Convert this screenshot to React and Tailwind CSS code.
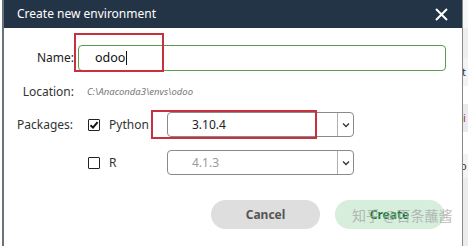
import React from "react";

const font = { fontFamily: '"Noto Sans", "Open Sans", "Noto Sans CJK SC", sans-serif' };

function Checkbox({ checked }) {
  return (
    <div className="w-[12px] h-[12px] border-[1.5px] border-[#222] rounded-[1px] flex items-center justify-center bg-white">
      {checked && (
        <svg width="10" height="10" viewBox="0 0 10 10">
          <path d="M1.5 5.2 L4 7.6 L8.6 2.2" fill="none" stroke="#111" strokeWidth="2" />
        </svg>
      )}
    </div>
  );
}

function Select({ value, muted }) {
  return (
    <div className="w-[187px] h-[25px] border border-[#8a8a8a] rounded-[4px] flex items-center bg-white">
      <div className={`flex-1 pl-[24px] text-[12px] ${muted ? "text-[#9a9a9a]" : "text-[#222]"}`}>{value}</div>
      <div className="w-[16px] h-full border-l border-[#b0b0b0] flex items-center justify-center">
        <svg width="8" height="6" viewBox="0 0 8 6">
          <path d="M1 1.5 L4 4.5 L7 1.5" fill="none" stroke="#333" strokeWidth="1.3" />
        </svg>
      </div>
    </div>
  );
}

export default function App() {
  return (
    <div className="relative w-[468px] h-[246px] bg-white flex overflow-hidden" style={font}>
      <div className="w-[2px] bg-white" />
      <div className="w-[460px] h-full border-l-2 border-[#66727e] flex flex-col">
        <div className="h-[28px] bg-[#243447] flex items-center justify-between pl-[13px] pr-[14px]">
          <span className="text-white text-[12px]">Create new environment</span>
          <svg width="13" height="13" viewBox="0 0 13 13">
            <path d="M1 1 L12 12 M12 1 L1 12" stroke="#fff" strokeWidth="2" />
          </svg>
        </div>

        <div className="flex items-center mt-[17px] h-[26px]">
          <div className="w-[70px] text-right text-[12px] text-[#222]">Name:</div>
          <div className="ml-[4px] w-[368px] h-[26px] border border-[#5c9a4e] rounded-[4px] flex items-center pl-[16px] text-[12.5px] text-[#111]">
            odoo<span className="ml-[1px] w-px h-[14px] bg-[#111]" />
          </div>
        </div>

        <div className="flex items-center mt-[11px] h-[20px]">
          <div className="w-[70px] text-right text-[12px] text-[#333]">Location:</div>
          <div className="ml-[13px] text-[9.5px] italic text-[#777]">C:\Anaconda3\envs\odoo</div>
        </div>

        <div className="flex items-center mt-[10px] h-[25px]">
          <div className="w-[69px] text-right text-[12px] text-[#333]">Packages:</div>
          <div className="ml-[15px]"><Checkbox checked /></div>
          <div className="ml-[9px] w-[58px] text-[12px] text-[#333]">Python</div>
          <Select value="3.10.4" />
        </div>

        <div className="flex items-center mt-[13px] h-[25px]">
          <div className="w-[69px]" />
          <div className="ml-[15px]"><Checkbox /></div>
          <div className="ml-[9px] w-[58px] text-[12px] text-[#333]">R</div>
          <Select value="4.1.3" muted />
        </div>

        <div className="flex justify-end gap-[15px] mt-[25px] pr-[18px]">
          <div className="w-[109px] h-[29px] rounded-full bg-[#dedede] flex items-center justify-center text-[12px] font-bold text-[#555]">
            Cancel
          </div>
          <div className="w-[109px] h-[29px] rounded-full bg-[#d6eedb] flex items-center justify-center text-[12px] font-bold text-[#1b7a3c]">
            Create
          </div>
        </div>
      </div>
      <div className="w-[6px] h-full border-l border-[#8a8a8a] bg-[#f4f4f4] flex flex-col text-[11px] overflow-hidden">
        <div className="h-[28px] bg-[#f7f7f7]" />
        <div className="h-[30px] bg-[#eeeeee]" />
        <div className="h-[28px] text-[#333] leading-[28px] -ml-[1px]">t</div>
        <div className="h-[18px] bg-white" />
        <div className="h-[28px] bg-[#e9ecef] text-[#a33] leading-[28px]">i</div>
        <div className="h-[22px] bg-white" />
        <div className="h-[24px] text-[#333] leading-[24px] -ml-[3px]">o</div>
        <div className="flex-1 bg-[#ececec]" />
      </div>

      <div className="absolute left-[74px] top-[33px] w-[90px] h-[39px] border-2 border-[#c6303f]" />
      <div className="absolute left-[151px] top-[110px] w-[166px] h-[29px] border-2 border-[#c6303f]" />
      <div className="absolute left-[352px] top-[206px] whitespace-nowrap text-[14px] leading-[18px] text-[#a8a8a8]/80" style={{ fontFamily: '"Noto Sans CJK SC", sans-serif' }}>
        知乎 @百条蘸酱
      </div>
    </div>
  );
}
